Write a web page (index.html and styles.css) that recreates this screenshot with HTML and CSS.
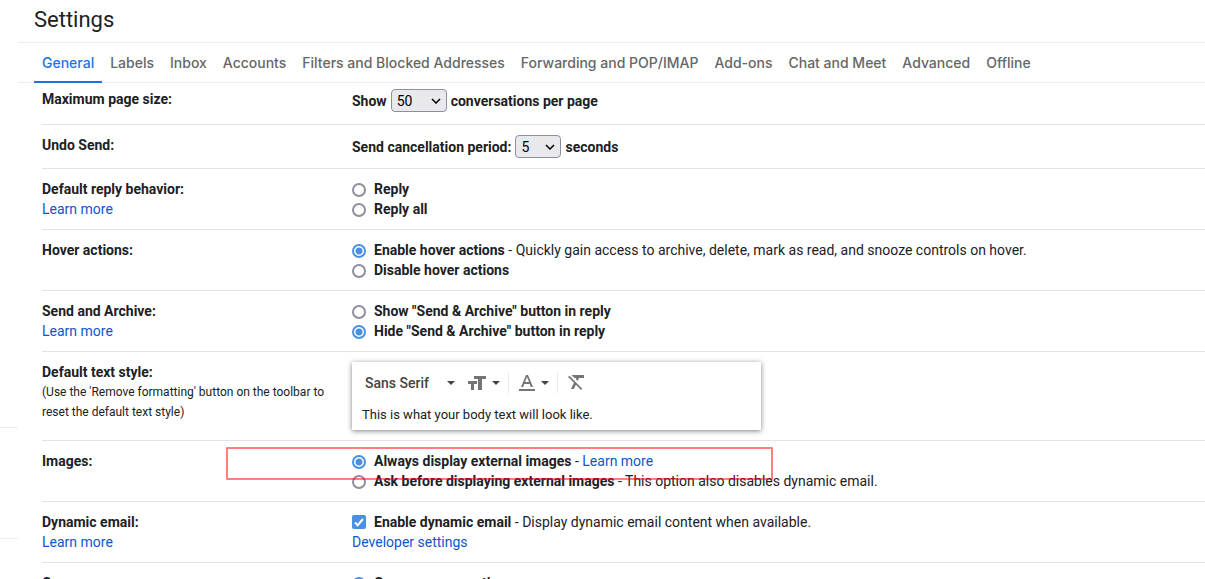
FILE: index.html
```html
<!DOCTYPE html>
<html lang="en">
<head>
<meta charset="utf-8">
<title>Settings</title>
<link rel="stylesheet" href="styles.css">
</head>
<body>
<div class="app">
  <aside class="rail">
    <div class="rail-section rail-main"></div>
    <div class="rail-section rail-meet"></div>
  </aside>
  <main class="settings">
    <h1 class="title">Settings</h1>
    <nav class="tabs">
      <a class="tab active" href="#general">General</a>
      <a class="tab" href="#labels">Labels</a>
      <a class="tab" href="#inbox">Inbox</a>
      <a class="tab" href="#accounts">Accounts</a>
      <a class="tab" href="#filters">Filters and Blocked Addresses</a>
      <a class="tab" href="#forwarding">Forwarding and POP/IMAP</a>
      <a class="tab" href="#addons">Add-ons</a>
      <a class="tab" href="#chat">Chat and Meet</a>
      <a class="tab" href="#advanced">Advanced</a>
      <a class="tab" href="#offline">Offline</a>
    </nav>
    <form class="rows">
      <section class="row row-first">
        <div class="name"><b>Maximum page size:</b></div>
        <div class="value inline">
          <label for="page-size">Show</label>
          <select id="page-size" class="select select-wide"><option>50</option><option>100</option></select>
          <b>conversations per page</b>
        </div>
      </section>
      <section class="row">
        <div class="name"><b>Undo Send:</b></div>
        <div class="value inline">
          <label for="undo">Send cancellation period:</label>
          <select id="undo" class="select"><option>5</option><option>10</option></select>
          <b>seconds</b>
        </div>
      </section>
      <section class="row">
        <div class="name"><b>Default reply behavior:</b><a href="#reply-help">Learn more</a></div>
        <div class="value">
          <div class="choice"><input type="radio" name="reply" id="reply-one"><label for="reply-one">Reply</label></div>
          <div class="choice"><input type="radio" name="reply" id="reply-all"><label for="reply-all">Reply all</label></div>
        </div>
      </section>
      <section class="row">
        <div class="name"><b>Hover actions:</b></div>
        <div class="value">
          <div class="choice"><input type="radio" name="hover" id="hover-on" checked><p><label for="hover-on">Enable hover actions</label> - Quickly gain access to archive, delete, mark as read, and snooze controls on hover.</p></div>
          <div class="choice"><input type="radio" name="hover" id="hover-off"><label for="hover-off">Disable hover actions</label></div>
        </div>
      </section>
      <section class="row">
        <div class="name"><b>Send and Archive:</b><a href="#archive-help">Learn more</a></div>
        <div class="value">
          <div class="choice"><input type="radio" name="archive" id="archive-show"><label for="archive-show">Show "Send &amp; Archive" button in reply</label></div>
          <div class="choice"><input type="radio" name="archive" id="archive-hide" checked><label for="archive-hide">Hide "Send &amp; Archive" button in reply</label></div>
        </div>
      </section>
      <section class="row">
        <div class="name"><b>Default text style:</b><small>(Use the 'Remove formatting' button on the toolbar to reset the default text style)</small></div>
        <div class="value">
          <div class="style-card">
            <div class="toolbar">
              <button type="button" class="tool font-tool">Sans Serif <span class="caret"></span></button>
              <button type="button" class="tool size-tool" aria-label="Size">
                <svg width="18" height="14" viewBox="0 0 18 14"><path d="M6 0h12v3h-4v11h-4V3H6zM0 5h9v3H6v6H3V8H0z"/></svg>
                <span class="caret"></span>
              </button>
              <button type="button" class="tool divided" aria-label="Text color">
                <svg width="16" height="16" viewBox="0 0 16 16"><path d="M0 14h16v2H0zM7 0h2l5 12h-2.200l-1.100-3H5.300l-1.100 3H2zM6 7h4L8 2z"/></svg>
                <span class="caret"></span>
              </button>
              <button type="button" class="tool divided" aria-label="Remove formatting">
                <svg width="16" height="15" viewBox="0 0 16 15"><path d="M3.500 0H16v3h-5L9.700 6 7.800 4.200 8.300 3H6.500zM1.300.7l13 13L13 15 7.900 9.800 5.900 14H3l2.900-6.300L0 2z"/></svg>
              </button>
            </div>
            <p class="preview">This is what your body text will look like.</p>
          </div>
        </div>
      </section>
      <section class="row marked">
        <div class="name"><b>Images:</b></div>
        <div class="value">
          <div class="choice"><input type="radio" name="images" id="images-always" checked><p><label for="images-always">Always display external images</label> - <a href="#images-help">Learn more</a></p></div>
          <div class="choice"><input type="radio" name="images" id="images-ask"><p><label for="images-ask">Ask before displaying external images</label> - This option also disables dynamic email.</p></div>
        </div>
        <div class="marker"></div>
      </section>
      <section class="row">
        <div class="name"><b>Dynamic email:</b><a href="#dynamic-help">Learn more</a></div>
        <div class="value">
          <div class="choice"><input type="checkbox" id="dynamic" checked><p><label for="dynamic">Enable dynamic email</label> - Display dynamic email content when available.</p></div>
          <a href="#developer">Developer settings</a>
        </div>
      </section>
      <section class="row">
        <div class="name"><b>Grammar:</b></div>
        <div class="value">
          <div class="choice"><input type="radio" name="grammar" id="grammar-on" checked><label for="grammar-on">Grammar suggestions on</label></div>
        </div>
      </section>
    </form>
  </main>
</div>
</body>
</html>
```
FILE: styles.css
```css
* { box-sizing: border-box; }
body {
  margin: 0;
  background: #fff;
  color: #202124;
  font: 14px/20px Roboto, "Liberation Sans", sans-serif;
}
.app { display: flex; height: 100vh; overflow: hidden; }
.rail { flex: 0 0 18px; }
.rail-section { border-bottom: 1px solid #ececec; }
.rail-main { height: 428px; }
.rail-meet { height: 111px; }
.settings { flex: 1; min-width: 0; }
.title {
  margin: 0;
  padding: 4px 16px 6px;
  border-bottom: 1px solid #ececec;
  font-size: 22px;
  line-height: 32px;
  font-weight: 400;
}
.tabs {
  display: flex;
  padding-left: 16px;
  border-bottom: 1px solid #ececec;
  font: 500 14px/40px Inter, sans-serif;
}
.tab {
  height: 40px;
  margin-bottom: -1px;
  padding: 0 8px;
  color: #666;
  white-space: nowrap;
}
.tab.active { color: #1a73e8; border-bottom: 2px solid #1a73e8; }
a { color: #1155cc; text-decoration: none; }
b, label { font-weight: 700; }
p { margin: 0; }
.rows { padding-left: 24px; }
.row {
  display: flex;
  padding: 10px 0;
  border-bottom: 1px solid #e3e3e3;
}
.row-first { padding: 6px 0 12px; }
.name { flex: 0 0 310px; padding-right: 8px; }
.name b, .name a, .name small { display: block; }
.name small { font-size: 12px; }
.value { flex: 1; min-width: 0; }
.inline { display: flex; align-items: center; gap: 4px; }
.choice { display: flex; align-items: center; gap: 8px; }
.select {
  appearance: none;
  width: 46px;
  height: 23px;
  padding: 0 5px;
  border: 1px solid #8f8f9d;
  border-radius: 4px;
  color: #000;
  font: inherit;
  background: #e9e9ed url("data:image/svg+xml,%3Csvg xmlns='http://www.w3.org/2000/svg' width='10' height='6'%3E%3Cpath d='M1 1l4 4 4-4' fill='none' stroke='%23000' stroke-width='1.500'/%3E%3C/svg%3E") no-repeat right 5px center;
}
.select-wide { width: 56px; }
input[type="radio"], input[type="checkbox"] {
  appearance: none;
  flex: none;
  width: 14px;
  height: 14px;
  margin: 2px 0 0;
  border: 2px solid #8f8f9d;
  border-radius: 50%;
}
input[type="radio"]:checked {
  border-color: #4a90e2;
  background: radial-gradient(circle, #4a90e2 3px, #fff 4px);
}
input[type="checkbox"] {
  margin-top: 0;
  border: 0;
  border-radius: 2px;
  background: #4a90e2 url("data:image/svg+xml,%3Csvg xmlns='http://www.w3.org/2000/svg' width='14' height='14'%3E%3Cpath d='M3 7.500l2.700 2.700L11 4' fill='none' stroke='%23fff' stroke-width='2'/%3E%3C/svg%3E") center;
}
.style-card {
  width: 409px;
  max-width: 100%;
  height: 68px;
  padding: 10px;
  box-shadow: 0 1px 5px rgba(0, 0, 0, .5);
}
.toolbar { display: flex; align-items: center; height: 21px; }
.tool {
  display: flex;
  align-items: center;
  gap: 6px;
  height: 20px;
  padding: 0;
  border: 0;
  background: none;
  color: #444;
  font: 500 14px/20px Roboto, sans-serif;
}
.tool svg { fill: #757575; }
.font-tool { width: 93px; padding-left: 3px; justify-content: space-between; }
.size-tool { margin: 0 8px 0 13px; }
.divided { padding: 0 8px 0 10px; border-left: 1px solid #ebebeb; }
.caret {
  border: 4px solid transparent;
  border-top-color: #444;
  border-bottom: 0;
}
.preview { margin-top: 12px; font-size: 13px; }
.marked { position: relative; }
.marker {
  position: absolute;
  top: 6px;
  left: 184px;
  width: 547px;
  height: 33px;
  border: 2px solid rgba(255, 0, 0, .5);
  border-radius: 1px;
  pointer-events: none;
}
```
